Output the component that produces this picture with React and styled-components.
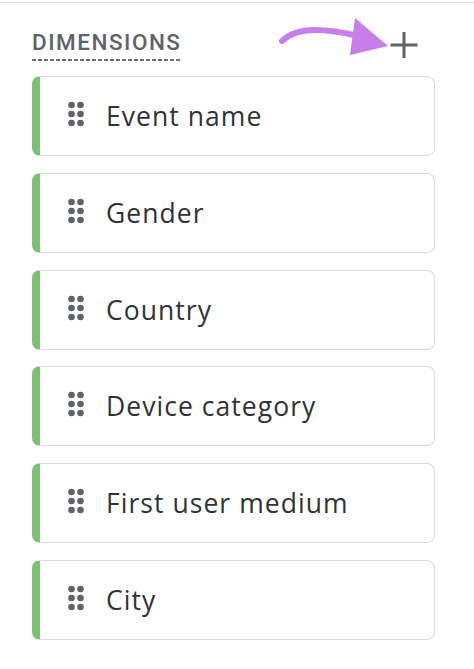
import React from "react";
import styled, { createGlobalStyle } from "styled-components";

const GlobalStyle = createGlobalStyle`
  html, body {
    margin: 0;
    padding: 0;
    background: #ffffff;
  }
  body {
    font-family: "Open Sans", "Noto Sans", sans-serif;
  }
`;

const Page = styled.div`
  width: 474px;
  min-height: 669px;
  background: #ffffff;
  padding-top: 2px;
  box-sizing: border-box;
`;

const TopRule = styled.div`
  height: 1px;
  background: #dfe0e2;
`;

const Panel = styled.section`
  padding: 0 39px 0 32px;
`;

const Header = styled.header`
  position: relative;
  display: flex;
  align-items: center;
  justify-content: space-between;
  padding: 26px 17px 0 0;
  margin-bottom: 15px;
`;

const Title = styled.h2`
  margin: 0;
  font-family: Roboto, "Liberation Sans", sans-serif;
  font-weight: 500;
  font-size: 22.5px;
  line-height: 26px;
  letter-spacing: 1.5px;
  color: #5f6368;
  background-image: repeating-linear-gradient(
    to right,
    #6b6f73 0 4px,
    transparent 4px 6px
  );
  background-size: 100% 2px;
  background-repeat: no-repeat;
  background-position: left bottom;
  padding-bottom: 6px;
`;

const AddButton = styled.button`
  display: flex;
  align-items: center;
  justify-content: center;
  width: 28px;
  height: 26px;
  padding: 0;
  border: none;
  background: transparent;
  color: #5f6368;
  cursor: pointer;
`;

const Annotation = styled.svg`
  position: absolute;
  left: 244px;
  top: 10px;
  width: 120px;
  height: 45px;
  pointer-events: none;
`;

const List = styled.ul`
  list-style: none;
  margin: 0;
  padding: 0;
  display: flex;
  flex-direction: column;
  gap: 16.8px;
`;

const Card = styled.li`
  box-sizing: border-box;
  height: 80px;
  display: flex;
  align-items: center;
  gap: 20px;
  padding-left: 28px;
  background: #ffffff;
  border: 1px solid #dadce0;
  border-left: 8px solid ${(p) => p.$accent};
  border-radius: 8px;
`;

const Handle = styled.svg`
  flex: none;
  width: 18px;
  height: 26px;
  margin-bottom: 4px;
`;

const Label = styled.span`
  font-family: "Open Sans", "Noto Sans", sans-serif;
  font-weight: 500;
  font-size: 26.5px;
  line-height: 26px;
  letter-spacing: 1.05px;
  color: #303336;
`;

const PlusIcon = () => (
  <svg width="28" height="26" viewBox="0 0 28 26" aria-hidden="true">
    <path
      d="M14 0 V26 M0.5 13 H27.5"
      stroke="currentColor"
      strokeWidth="3"
      fill="none"
    />
  </svg>
);

const DragHandle = () => (
  <Handle viewBox="0 0 18 26" aria-hidden="true">
    {[4, 13, 22].map((cy) =>
      [3.5, 12.5].map((cx) => (
        <circle key={`${cx}-${cy}`} cx={cx} cy={cy} r="3.3" fill="#5f6368" />
      ))
    )}
  </Handle>
);

const dimensions = [
  "Event name",
  "Gender",
  "Country",
  "Device category",
  "First user medium",
  "City",
];

export default function App() {
  return (
    <>
      <GlobalStyle />
      <Page>
        <TopRule />
        <Panel>
          <Header>
            <Title>DIMENSIONS</Title>
            <AddButton aria-label="Add dimension">
              <PlusIcon />
            </AddButton>
            <Annotation viewBox="0 0 120 45" aria-hidden="true">
              <path
                d="M6 28 Q18 17 38 17 Q58 17 82 23"
                stroke="#c67fe9"
                strokeWidth="6"
                strokeLinecap="round"
                fill="none"
              />
              <polygon points="79,5 74,42 112,33" fill="#c67fe9" />
            </Annotation>
          </Header>
          <List>
            {dimensions.map((d) => (
              <Card key={d} $accent="#7dbf74">
                <DragHandle />
                <Label>{d}</Label>
              </Card>
            ))}
          </List>
        </Panel>
      </Page>
    </>
  );
}
